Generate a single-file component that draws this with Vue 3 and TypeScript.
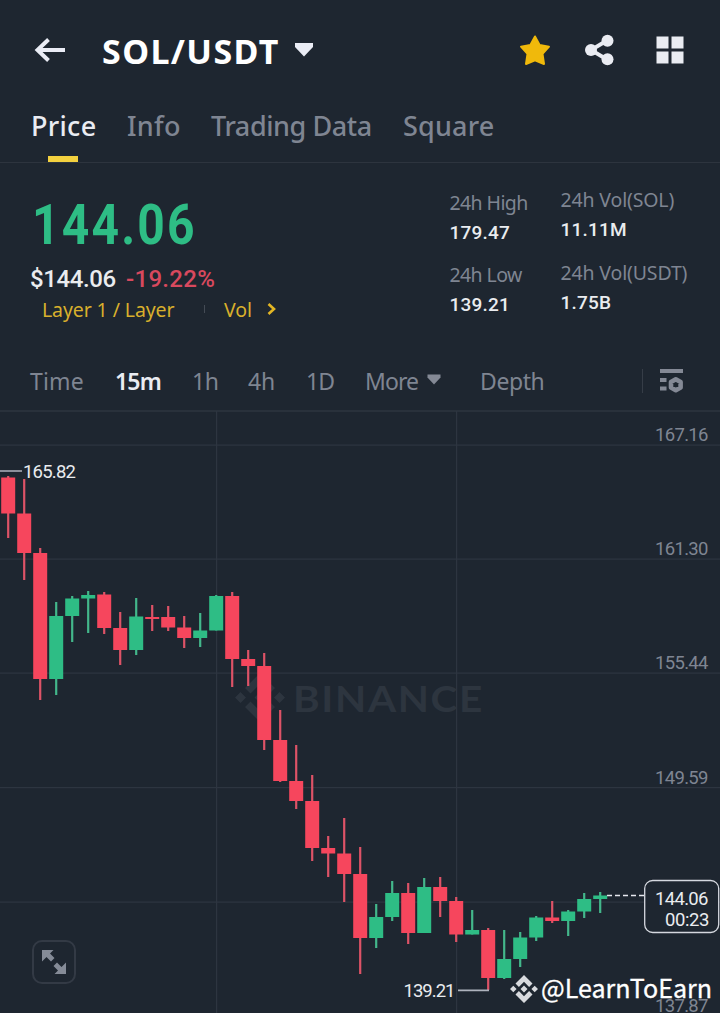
<script setup lang="ts">
type Candle = { x: number; up: boolean; top: number; bottom: number; high: number; low: number }

const rows: [number, number, number, number, number][] = [
  [0, 477.5, 513.5, 476, 538], [0, 513.5, 553, 479, 580], [0, 553, 679, 548, 700],
  [1, 616, 679, 602, 695], [1, 598.5, 616, 596, 642], [1, 595, 598.5, 591, 633],
  [0, 594.5, 628, 592, 634], [0, 628, 650, 612, 665], [1, 616.5, 650, 598, 655],
  [0, 617, 619, 605, 631], [0, 617, 627.5, 606, 631], [0, 627.5, 638, 616, 648],
  [1, 630.5, 638, 613, 647], [1, 596, 630.5, 595, 630.5], [0, 596, 659, 592, 687],
  [0, 659, 666, 650, 686], [0, 666, 740, 653, 750], [0, 740, 781, 710, 782],
  [0, 781, 801, 745, 809], [0, 801, 848, 775, 861], [0, 848, 853.5, 836, 877],
  [0, 853.5, 874, 818, 902], [0, 874, 938, 847, 974], [1, 917, 938, 904, 948],
  [1, 893, 917, 881, 921], [0, 893, 933, 883, 944], [1, 887, 933, 878, 933],
  [0, 887, 901, 877, 917], [0, 901, 934.5, 897, 942], [1, 930, 934.5, 910, 934.5],
  [0, 930, 978, 928, 990], [1, 959, 978, 930, 979], [1, 937.5, 959, 932, 967],
  [1, 917.5, 937.5, 916, 941], [0, 917.5, 921, 901, 923], [1, 911.5, 921, 910, 936],
  [1, 899, 911.5, 893, 918], [1, 895.5, 899, 892, 913],
]
const candles: Candle[] = rows.map(([up, top, bottom, high, low], i) => ({
  x: 8.2 + i * 16, up: up === 1, top, bottom, high, low,
}))

const gridY = [445, 559, 673, 787.5, 902]
const gridX = [216.5, 456.5]
const axis = [
  { y: 441, label: '167.16' },
  { y: 555, label: '161.30' },
  { y: 669, label: '155.44' },
  { y: 784, label: '149.59' },
  { y: 1012, label: '137.87' },
]
const stats = [
  [{ label: '24h High', value: '179.47' }, { label: '24h Low', value: '139.21' }],
  [{ label: '24h Vol(SOL)', value: '11.11M' }, { label: '24h Vol(USDT)', value: '1.75B' }],
]
</script>

<template>
  <div class="screen">
    <header class="bar">
      <svg class="back" width="32" height="26" viewBox="0 0 32 26">
        <path d="M31 13H3M14.500 2.500L3.500 13l11 10.500" fill="none" stroke="#eaecf5" stroke-width="4" />
      </svg>
      <h1 class="pair">SOL/USDT</h1>
      <svg class="caret" width="20" height="16" viewBox="0 0 20 16">
        <path d="M1 1h18v4L10 14.500 1 5z" fill="#eaecf5" />
      </svg>
      <svg class="star" width="32" height="32" viewBox="0 0 32 32">
        <path d="M16 2.500l4.600 8.400 9.400 1.800-6.500 7.200 1.500 10.100L16 26.400l-9 3.600 1.500-10.100L2 12.700l9.400-1.800z" fill="#f0b90b" stroke="#f0b90b" stroke-width="2" stroke-linejoin="round" />
      </svg>
      <svg class="share" width="30" height="32" viewBox="0 0 30 32">
        <path d="M23 6.500L7 16l16 9.500" fill="none" stroke="#eaecf2" stroke-width="3.800" />
        <circle cx="23.500" cy="6.800" r="6" fill="#eaecf2" />
        <circle cx="7" cy="16" r="6" fill="#eaecf2" />
        <circle cx="23.500" cy="25.200" r="6" fill="#eaecf2" />
      </svg>
      <svg class="apps" width="28" height="28" viewBox="0 0 28 28">
        <path d="M.5.500h12v12H.5zM15.500.500h12v12h-12zM.5 15.500h12v12H.5zM15.500 15.500h12v12h-12z" fill="#eaecf2" />
      </svg>
    </header>

    <nav class="tabs">
      <span class="tab tab-price active">Price</span>
      <span class="tab tab-info">Info</span>
      <span class="tab tab-data">Trading Data</span>
      <span class="tab tab-square">Square</span>
    </nav>

    <section class="summary">
      <div class="quote">
        <div class="last">144.06</div>
        <div class="sub"><span class="fiat">$144.06</span><span class="change">-19.22%</span></div>
        <div class="tags">
          <span class="tag-layer">Layer 1 / Layer</span>
          <i class="sep"></i>
          <span class="tag-vol">Vol</span>
          <svg width="10" height="14" viewBox="0 0 10 14"><path d="M1.500 2l5.500 5-5.500 5" fill="none" stroke="#e3b624" stroke-width="2.600" /></svg>
        </div>
      </div>
      <div v-for="(col, c) in stats" :key="c" class="col" :class="'col-' + c">
        <div v-for="s in col" :key="s.label" class="stat">
          <span class="label">{{ s.label }}</span>
          <span class="value">{{ s.value }}</span>
        </div>
      </div>
    </section>

    <nav class="intervals">
      <span class="iv iv-time">Time</span>
      <span class="iv iv-15 on">15m</span>
      <span class="iv iv-1h">1h</span>
      <span class="iv iv-4h">4h</span>
      <span class="iv iv-1d">1D</span>
      <span class="iv iv-more">More</span>
      <svg class="more-caret" width="14" height="11" viewBox="0 0 14 11"><path d="M.5.500h13v3L7 10.500.5 3.500z" fill="#848995" /></svg>
      <span class="iv iv-depth">Depth</span>
      <i class="rule"></i>
      <svg class="settings" width="26" height="25" viewBox="0 0 26 25">
        <path d="M1 1h23v4H1zM1 10h6.500v4H1zM1 18.500h6.500v4H1z" fill="#848995" />
        <path d="M16.800 11.200l4.800 2.800v5.400l-4.800 2.800-4.800-2.800V14z" fill="none" stroke="#848995" stroke-width="4.600" stroke-linejoin="round" />
      </svg>
    </nav>

    <svg class="chart" width="720" height="603" viewBox="0 410 720 603">
      <rect x="0" y="410" width="720" height="2" fill="#29313b" />
      <g fill="#2d3540">
        <rect v-for="y in gridY" :key="'h' + y" x="0" :y="y - 0.5" width="720" height="1.200" />
        <rect v-for="x in gridX" :key="'v' + x" :x="x - 0.5" y="411" width="1.200" height="602" />
      </g>
      <g fill="#2d353f">
        <path d="M260 673l15 15-5.500 5.500-9.500-9.500-9.500 9.500-5.500-5.500zM260 722l15-15-5.500-5.500-9.500 9.500-9.500-9.500-5.500 5.500zM240.500 692l5.500 5.500-5.500 5.500-5.500-5.500zM279.500 692l5.500 5.500-5.500 5.500-5.500-5.500zM260 692l5.500 5.500-5.500 5.500-5.500-5.500z" />
        <text class="brand" x="293" y="711.500" textLength="191" lengthAdjust="spacingAndGlyphs">BINANCE</text>
      </g>
      <g class="num axis">
        <text v-for="a in axis" :key="a.label" x="655" :y="a.y" textLength="53.500">{{ a.label }}</text>
      </g>
      <g v-for="c in candles" :key="c.x">
        <rect :x="c.x - 1.100" :y="c.high" width="2.200" :height="c.low - c.high" :fill="c.up ? '#43b78b' : '#dd5367'" />
        <rect :x="c.x - 7" :y="c.top" width="14" :height="c.bottom - c.top" :fill="c.up ? '#2ebd85' : '#f6465d'" />
      </g>
      <path d="M0 471H22M458 990.300H489" stroke="#aeb3bd" stroke-width="1.700" />
      <g class="num mark">
        <text x="23" y="478" textLength="53">165.82</text>
        <text x="403.500" y="997" textLength="52">139.21</text>
      </g>
      <path d="M607 895.500H644" stroke="#e6e8ee" stroke-width="1.300" stroke-dasharray="5 3" />
      <rect x="644.700" y="880.500" width="74" height="52" rx="8" fill="#1e2630" stroke="#d5d8df" stroke-width="1.300" />
      <g class="num tagtext">
        <text x="655" y="904.500" textLength="53.500">144.06</text>
        <text x="665" y="926" textLength="44.500">00:23</text>
      </g>
      <g>
        <rect x="33" y="941" width="42" height="42" rx="9" fill="none" stroke="#333a45" stroke-width="2" />
        <path d="M42 950h11.500l-3.500 3.500 4.500 4.500-3.500 3.500-4.500-4.500-4.500 4.500zM66 974H54.500l3.500-3.500-4.500-4.500 3.500-3.500 4.500 4.500 4.500-4.500z" fill="#858b97" />
      </g>
      <g fill="#d8dade">
        <path d="M524 975l8.500 8.500-3.400 3.400-5.100-5.100-5.100 5.100-3.400-3.400zM524 1003l8.500-8.500-3.400-3.400-5.100 5.100-5.100-5.100-3.400 3.400zM513.300 985.700l3.300 3.300-3.300 3.300-3.300-3.300zM534.700 985.700l3.300 3.300-3.300 3.300-3.300-3.300zM524 985.500l3.500 3.500-3.500 3.500-3.500-3.500z" />
      </g>
      <text class="credit" x="541" y="998" textLength="171" lengthAdjust="spacingAndGlyphs">@LearnToEarn</text>
    </svg>
  </div>
</template>

<style>
html, body { margin: 0; background: #1e2630; }
</style>

<style scoped>
.screen { width: 720px; height: 1013px; overflow: hidden; background: #1e2630; color: #eaecef; font-family: "Noto Sans", "Open Sans", sans-serif; display: flex; flex-direction: column; white-space: nowrap; }
svg { display: block; flex: none; }
.bar { height: 101px; box-sizing: border-box; display: flex; align-items: center; padding: 0 0 1px 34px; }
.pair { margin: 1px 0 0 36px; width: 176px; font-size: 34px; font-weight: 700; line-height: 40px; color: #fff; letter-spacing: 1.400px; }
.caret { margin-left: 16px; }
.star { margin-left: 205px; }
.share { margin-left: 33px; }
.apps { margin-left: 42px; }
.tabs { height: 62px; box-sizing: border-box; display: flex; padding: 5px 0 0 31px; border-bottom: 1px solid #2d343e; }
.tab { font-size: 27px; line-height: 40px; font-weight: 500; color: #7f8592; }
.tab-price { width: 96px; letter-spacing: 0.300px; }
.tab-info { width: 84px; letter-spacing: 0.300px; }
.tab-data { width: 192px; letter-spacing: -0.420px; }
.tab-square { letter-spacing: 0.200px; }
.tab.active { color: #eaecf2; }
.tab.active::after { content: ""; display: block; width: 30px; height: 6px; margin: 10px 0 0 17px; background: #f3d13f; }
.summary { height: 187px; display: flex; padding-left: 30px; }
.quote { width: 420px; }
.last { margin: 30px 0 0 2px; height: 64px; font: 700 55px/64px Roboto, sans-serif; color: #2ebd85; letter-spacing: 2.500px; transform: scaleX(0.873); transform-origin: 0 50%; }
.sub { height: 38px; line-height: 38px; font-family: Roboto, sans-serif; font-size: 24px; font-weight: 500; display: flex; margin-top: 3px; }
.fiat { width: 96px; letter-spacing: -0.400px; }
.change { color: #d8495e; letter-spacing: 0.300px; }
.tags { display: flex; align-items: center; height: 24px; padding-left: 12px; margin-top: -1px; font-size: 19.500px; letter-spacing: -0.100px; color: #d9b02c; }
.tag-layer { width: 162px; }
.sep { width: 1px; height: 8px; background: #444b55; margin-right: 19px; }
.tag-vol { width: 43px; }
.col-0 { width: 111px; padding-top: 28px; }
.col-1 { padding-top: 25px; }
.col-0 .label { letter-spacing: -0.600px; }
.col-0 .stat { height: 72px; }
.stat { height: 72.500px; display: flex; flex-direction: column; margin-left: -0.500px; }
.label { font-size: 19.500px; line-height: 24px; color: #7f8592; letter-spacing: -0.150px; }
.value { margin-top: 4px; font: 500 19px/28px Roboto, sans-serif; letter-spacing: 0.200px; }
.intervals { height: 60px; display: flex; align-items: center; padding-left: 30px; box-sizing: border-box; padding-top: 1px; }
.iv { font-size: 23px; line-height: 32px; color: #7f8592; }
.iv.on { color: #eaecf2; font-weight: 600; letter-spacing: -0.800px; }
.iv-time { width: 85px; letter-spacing: 0.200px; }
.iv-15 { width: 77px; }
.iv-1h { width: 56px; letter-spacing: -0.500px; }
.iv-4h { width: 58px; letter-spacing: -0.200px; }
.iv-1d { width: 59px; letter-spacing: -1px; }
.iv-more { width: 62px; letter-spacing: -0.900px; }
.more-caret { margin-bottom: 3px; }
.iv-depth { margin-left: 39px; width: 162px; letter-spacing: -0.400px; }
.rule { width: 1px; height: 24px; background: #363d47; margin-right: 16px; }
.num { font-family: Roboto, sans-serif; font-size: 18.500px; }
.axis { fill: #7f8592; }
.mark { fill: #eaecef; }
.tagtext { fill: #eaecef; font-size: 18.500px; }
.brand { font: 700 37px Lato, "Open Sans", sans-serif; letter-spacing: 1.500px; }
.credit { font: 400 25px "Noto Sans CJK SC", "Noto Sans", sans-serif; fill: #fff; stroke: #fff; stroke-width: 0.300px; }
</style>
